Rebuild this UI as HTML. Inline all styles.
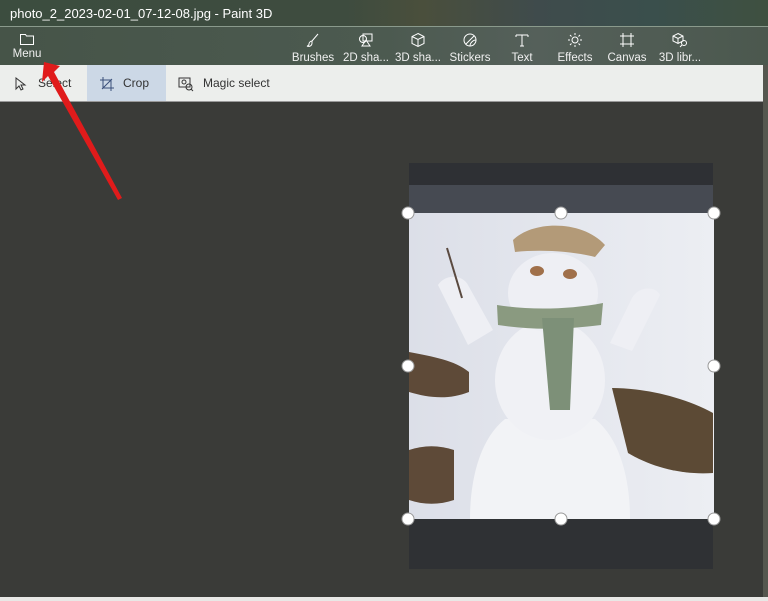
<!DOCTYPE html>
<html><head><style>
*{margin:0;padding:0;box-sizing:border-box}
body{width:768px;height:601px;overflow:hidden;background:#3a3b38;font-family:"Liberation Sans",sans-serif;position:relative}
#title{position:absolute;left:0;top:0;width:768px;height:27px;background:linear-gradient(90deg,#3c4d3f 0%,#3e4c3f 45%,#4a4f3c 55%,#3f4b4c 70%,#3a4f4c 85%,#3f5040 100%);color:#fff;font-size:13px;line-height:27px;padding-left:10px;border-bottom:1px solid #8a9a8c}
#bar{position:absolute;left:0;top:27px;width:768px;height:38px;background:linear-gradient(90deg,#465448 0%,#4c5a50 50%,#55605a 70%,#4b584e 100%)}
.t{position:absolute;top:0;color:#f0f0f0;font-size:11.5px;text-align:center;width:60px;white-space:nowrap}
.t svg{display:block;margin:5px auto 4px;width:16px;height:16px}
#strip{position:absolute;left:0;top:65px;width:768px;height:37px;background:#eceeec;border-bottom:1px solid #999}
.s{position:absolute;top:0;height:36px;line-height:36px;font-size:12px;color:#333}
</style></head><body>
<div id="title">photo_2_2023-02-01_07-12-08.jpg - Paint 3D</div>
<div id="bar">
 <div class="t" style="left:-3px;top:-1px"><svg viewBox="0 0 16 16" fill="none" stroke="#fff" style="margin-bottom:1px"><path d="M1.5 3.5h5l1 1.5h7v8.5h-13z"/></svg>Menu</div>
 <div class="t" style="left:283px"><svg viewBox="0 0 16 16" fill="none" stroke="#fff"><path d="M13 2L7 9M7 9c-2 0-3 2-3 3s-1 2-2 2c2 1 5 0 5-3z"/></svg>Brushes</div>
 <div class="t" style="left:336px"><svg viewBox="0 0 16 16" fill="none" stroke="#fff"><rect x="5" y="2" width="9" height="7"/><circle cx="5" cy="7" r="3.5"/><path d="M8 8l-4 6h8z"/></svg>2D sha...</div>
 <div class="t" style="left:388px"><svg viewBox="0 0 16 16" fill="none" stroke="#fff"><path d="M8 1.5l6 3v7l-6 3-6-3v-7zM2 4.5l6 3 6-3M8 7.5v7"/></svg>3D sha...</div>
 <div class="t" style="left:440px"><svg viewBox="0 0 16 16" fill="none" stroke="#fff"><circle cx="8" cy="8" r="6"/><path d="M4 12l8-8M8 14c0-3 3-6 6-6"/></svg>Stickers</div>
 <div class="t" style="left:492px"><svg viewBox="0 0 16 16" fill="none" stroke="#fff"><path d="M2 3h12M8 3v11M6 14h4M2 3v2M14 3v2"/></svg>Text</div>
 <div class="t" style="left:545px"><svg viewBox="0 0 16 16" fill="none" stroke="#fff"><circle cx="8" cy="8" r="3"/><path d="M8 1v2M8 13v2M1 8h2M13 8h2M3 3l1.5 1.5M11.5 11.5L13 13M3 13l1.5-1.5M11.5 4.5L13 3"/></svg>Effects</div>
 <div class="t" style="left:597px"><svg viewBox="0 0 16 16" fill="none" stroke="#fff"><path d="M4 1v14M12 1v14M1 4h14M1 12h14"/></svg>Canvas</div>
 <div class="t" style="left:650px"><svg viewBox="0 0 16 16" fill="none" stroke="#fff"><path d="M6 1.5l5 2.5v5l-5 2.5-5-2.5v-5zM1 4l5 2.5 5-2.5M6 6.5v5"/><circle cx="12" cy="11" r="2.5"/><path d="M10 13l-2 2"/></svg>3D libr...</div>
</div>
<div id="strip">
 <div class="s" style="left:14px"><svg width="14" height="14" viewBox="0 0 14 14" style="vertical-align:middle" fill="none" stroke="#333"><path d="M2 1v11l3-3 2 4 2-1-2-4h4z"/></svg><span style="margin-left:10px">Select</span></div>
 <div class="s" style="left:87px;width:79px;background:#ccd8e6;padding-left:12px"><svg width="16" height="16" viewBox="0 0 16 16" style="vertical-align:middle" fill="none" stroke="#3a4f7a"><path d="M4 1v11h11M1 4h11v11M3 13L13 3"/></svg><span style="margin-left:8px">Crop</span></div>
 <div class="s" style="left:178px"><svg width="16" height="16" viewBox="0 0 16 16" style="vertical-align:middle" fill="none" stroke="#333"><rect x="1" y="2" width="11" height="9"/><circle cx="6" cy="6" r="2"/><circle cx="11" cy="11" r="3"/><path d="M13 13l2 2"/></svg><span style="margin-left:9px">Magic select</span></div>
</div>
<div style="position:absolute;left:763px;top:65px;width:5px;height:536px;background:#55574f"></div>
<div style="position:absolute;left:0;top:597px;width:768px;height:4px;background:#e8e8e6"></div>
<svg width="768" height="601" style="position:absolute;left:0;top:0">
 <defs><linearGradient id="sn" x1="0" y1="0" x2="1" y2="0"><stop offset="0" stop-color="#dcdfe8"/><stop offset="1" stop-color="#eceef3"/></linearGradient></defs>
 <rect x="409" y="163" width="304" height="406" fill="#2b2d30"/>
 <rect x="409" y="163" width="304" height="50" fill="#464a52"/>
 <rect x="409" y="163" width="304" height="22" fill="#2e3034"/>
 <rect x="409" y="213" width="305" height="306" fill="url(#sn)"/>
 <path d="M409 352c25 5 45 8 60 20v20c-20 8-40 6-60 0z" fill="#5e4a38"/>
 <path d="M409 450c15-5 30-5 45 0v50c-15 5-30 5-45 0z" fill="#5e4a38"/>
 <path d="M612 388c30 0 70 8 101 25v60c-30 2-60-5-85-20z" fill="#5c4a35"/>
 <path d="M470 519c0-40 10-80 35-100h90c25 20 35 60 35 100z" fill="#f2f3f6"/>
 <ellipse cx="550" cy="380" rx="55" ry="60" fill="#f0f1f5"/>
 <ellipse cx="553" cy="293" rx="45" ry="40" fill="#eeeff4"/>
 <path d="M438 285c8-12 25-10 30 0l25 45-25 15z" fill="#eeeff4"/>
 <path d="M660 295c-5-10-22-8-28 3l-22 45 22 8z" fill="#eeeff4"/>
 <path d="M513 240c20-20 70-20 92 5l-10 12c-20-5-50-8-80-5z" fill="#b39a78"/>
 <ellipse cx="537" cy="271" rx="7" ry="5" fill="#a0704a"/>
 <ellipse cx="570" cy="274" rx="7" ry="5" fill="#a0704a"/>
 <path d="M497 305c30 5 70 5 106-2l-2 22c-40 5-70 5-103 0z" fill="#8a9a80"/>
 <path d="M542 318h32l-4 92h-20z" fill="#7d9078"/>
 <path d="M447 248l15 50" stroke="#5a4a40" stroke-width="2"/>
 <rect x="409" y="519" width="304" height="50" fill="#2f3134"/>
 <g fill="#fff" stroke="#999" stroke-width="1">
  <circle cx="408" cy="213" r="6"/><circle cx="561" cy="213" r="6"/><circle cx="714" cy="213" r="6"/>
  <circle cx="408" cy="366" r="6"/><circle cx="714" cy="366" r="6"/>
  <circle cx="408" cy="519" r="6"/><circle cx="561" cy="519" r="6"/><circle cx="714" cy="519" r="6"/>
 </g>
 <path d="M44 62L60 66 54 72 122 198 118 200 48 76 42 82z" fill="#e01b1b"/>
</svg>
</body></html>
